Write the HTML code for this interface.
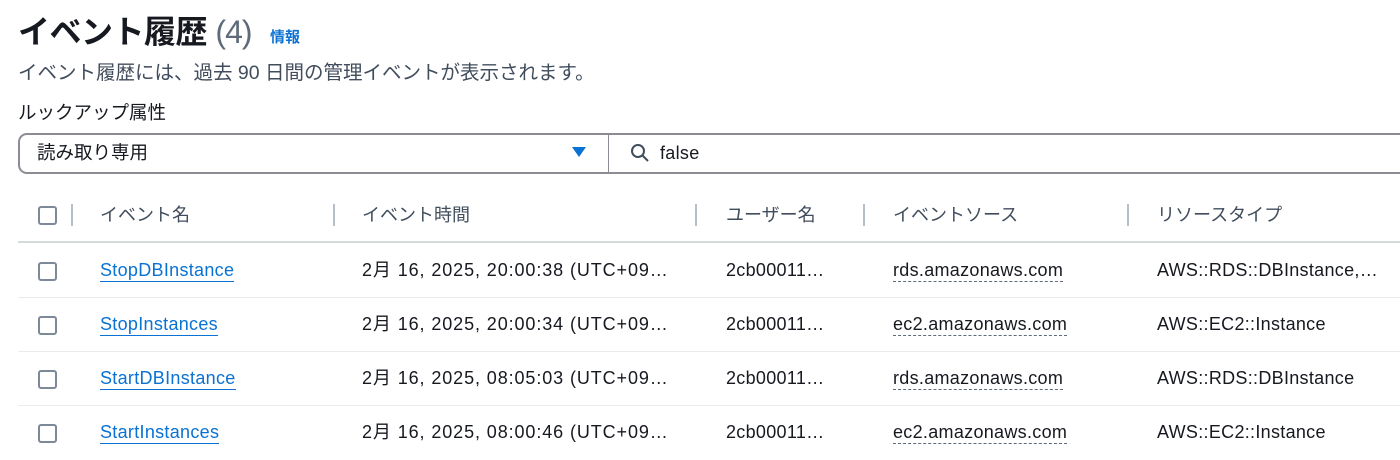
<!DOCTYPE html>
<html><head><meta charset="utf-8"><style>
body{margin:0;width:1400px;height:460px;overflow:hidden;background:#fff;font-family:"Liberation Sans","Noto Sans CJK JP",sans-serif;color:#16191f;position:relative}
.a{position:absolute;white-space:nowrap;line-height:22px}
.h1{left:18px;top:14px;font-size:32px;line-height:36px;font-weight:bold;letter-spacing:-0.5px}
.h1 span{color:#5f6b7a;font-weight:normal;letter-spacing:-1px}
.info{left:270px;top:27px;font-size:15px;color:#0972d3;font-weight:bold}
.sub{left:18px;top:62px;font-size:19.5px;color:#414d5c}
.lab{left:18px;top:102px;font-size:18.5px;color:#16191f}
.sel{left:18px;top:133px;width:588px;height:37px;border:2px solid #8c8c94;border-right:1px solid #8c8c94;border-radius:9px 0 0 9px}
.srch{left:609px;top:133px;width:820px;height:37px;border:2px solid #8c8c94;border-left:none}
.t{font-size:18px;letter-spacing:0.3px}
.tm{letter-spacing:0.9px}
.hd{font-size:18px;color:#414d5c;top:204px}
.sep{width:2px;height:22px;background:#b6bec9;top:204px}
.cb{width:15px;height:15px;border:2px solid #7d8998;border-radius:3px;left:38px}
.line{left:18px;width:1382px;height:1px;background:#e9ebed}
.lnk{color:#0972d3;border-bottom:1px solid #0972d3;padding-bottom:1px}
.dot{border-bottom:1px dashed #5f6b7a;padding-bottom:1px}
</style></head><body>
<div class="a h1">イベント履歴 <span>(4)</span></div>
<div class="a info">情報</div>
<div class="a sub">イベント履歴には、過去 90 日間の管理イベントが表示されます。</div>
<div class="a lab">ルックアップ属性</div>
<div class="a sel"></div>
<div class="a t" style="left:37px;top:142px;font-size:18.5px;letter-spacing:0">読み取り専用</div>
<svg class="a" style="left:572px;top:147px" width="14" height="11"><path d="M0 0H14L7 10Z" fill="#0972d3"/></svg>
<div class="a srch"></div>
<svg class="a" style="left:630px;top:143px" width="20" height="20"><circle cx="8" cy="8" r="6" fill="none" stroke="#414d5c" stroke-width="2"/><path d="M12.5 12.5L18 18" stroke="#414d5c" stroke-width="2"/></svg>
<div class="a t" style="left:660px;top:142px">false</div>

<div class="a cb" style="top:206px"></div>
<div class="a sep" style="left:71px"></div>
<div class="a hd" style="left:100px">イベント名</div>
<div class="a sep" style="left:333px"></div>
<div class="a hd" style="left:362px">イベント時間</div>
<div class="a sep" style="left:695px"></div>
<div class="a hd" style="left:726px">ユーザー名</div>
<div class="a sep" style="left:863px"></div>
<div class="a hd" style="left:893px">イベントソース</div>
<div class="a sep" style="left:1127px"></div>
<div class="a hd" style="left:1157px">リソースタイプ</div>
<div class="a line" style="top:241px;height:2px;background:#d5dbdb"></div>

<div class="a cb" style="top:262px"></div>
<div class="a t" style="left:100px;top:259px"><span class="lnk">StopDBInstance</span></div>
<div class="a t tm" style="left:362px;top:259px">2月 16, 2025, 20:00:38 (UTC+09…</div>
<div class="a t" style="left:726px;top:259px">2cb00011…</div>
<div class="a t" style="left:893px;top:259px"><span class="dot">rds.amazonaws.com</span></div>
<div class="a t" style="left:1157px;top:259px">AWS::RDS::DBInstance,…</div>
<div class="a line" style="top:297px"></div>

<div class="a cb" style="top:316px"></div>
<div class="a t" style="left:100px;top:313px"><span class="lnk">StopInstances</span></div>
<div class="a t tm" style="left:362px;top:313px">2月 16, 2025, 20:00:34 (UTC+09…</div>
<div class="a t" style="left:726px;top:313px">2cb00011…</div>
<div class="a t" style="left:893px;top:313px"><span class="dot">ec2.amazonaws.com</span></div>
<div class="a t" style="left:1157px;top:313px">AWS::EC2::Instance</div>
<div class="a line" style="top:351px"></div>

<div class="a cb" style="top:370px"></div>
<div class="a t" style="left:100px;top:367px"><span class="lnk">StartDBInstance</span></div>
<div class="a t tm" style="left:362px;top:367px">2月 16, 2025, 08:05:03 (UTC+09…</div>
<div class="a t" style="left:726px;top:367px">2cb00011…</div>
<div class="a t" style="left:893px;top:367px"><span class="dot">rds.amazonaws.com</span></div>
<div class="a t" style="left:1157px;top:367px">AWS::RDS::DBInstance</div>
<div class="a line" style="top:405px"></div>

<div class="a cb" style="top:424px"></div>
<div class="a t" style="left:100px;top:421px"><span class="lnk">StartInstances</span></div>
<div class="a t tm" style="left:362px;top:421px">2月 16, 2025, 08:00:46 (UTC+09…</div>
<div class="a t" style="left:726px;top:421px">2cb00011…</div>
<div class="a t" style="left:893px;top:421px"><span class="dot">ec2.amazonaws.com</span></div>
<div class="a t" style="left:1157px;top:421px">AWS::EC2::Instance</div>
</body></html>
